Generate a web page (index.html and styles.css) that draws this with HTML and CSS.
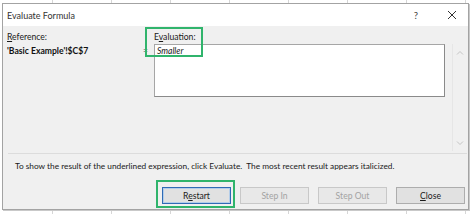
FILE: index.html
```html
<!DOCTYPE html>
<html lang="en">

<head>
  <meta charset="UTF-8" />
  <title>Evaluate Formula</title>
  <link rel="stylesheet" href="styles.css">
</head>

<body>
  <div class="dialog">
    <div class="titlebar">
      <span class="title">Evaluate Formula</span>
      <span class="help">?</span>
      <svg class="close-x" width="10" height="10" viewBox="0 0 10 10">
        <path d="M1 1 L9 9 M9 1 L1 9" stroke="#333" stroke-width="1" fill="none" />
      </svg>
    </div>

    <div class="content">
      <div class="main">
        <div class="label"><u>R</u>eference:</div>
        <div></div>
        <div class="label">E<u>v</u>aluation:</div>
        <div></div>

        <div class="ref">'Basic Example'!$C$7</div>
        <div class="equals">=</div>
        <div class="eval-box"><i>Smaller</i></div>
        <div class="scroller">
          <svg width="8" height="5" viewBox="0 0 8 5">
            <path d="M1 4.5 L4 1.5 L7 4.5" stroke="#c4c4c4" fill="none" />
          </svg>
          <svg width="8" height="5" viewBox="0 0 8 5">
            <path d="M1 0.5 L4 3.5 L7 0.5" stroke="#c4c4c4" fill="none" />
          </svg>
        </div>
      </div>

      <div class="separator"></div>

      <p class="info">To show the result of the underlined expression, click Evaluate.&nbsp; The most recent result appears italicized.</p>

      <div class="buttons">
        <button class="btn focused">R<u>e</u>start</button>
        <button class="btn" disabled>Step In</button>
        <button class="btn" disabled>Step Out</button>
        <button class="btn"><u>C</u>lose</button>
      </div>
    </div>

    <!-- green highlight boxes drawn over the dialog -->
    <div class="mark mark-eval"></div>
    <div class="mark mark-restart"></div>
  </div>
</body>

</html>
```

FILE: styles.css
```css
* {
  box-sizing: border-box;
}

body {
  margin: 0;
  width: 474px;
  height: 214px;
  overflow: hidden;
  padding: 3px 0 0 2px;
  background-color: #fff;
  background-image: linear-gradient(90deg, #d6d6d6 1px, transparent 1px);
  background-size: 59px 100%;
  background-position: 52px 0;
  font-family: Lato, 'Open Sans', sans-serif;
  color: #1a1a1a;
}

.dialog {
  position: relative;
  width: 467px;
  height: 207px;
  border: 1px solid #a3a3a3;
  background: #f0f0f0;
  box-shadow: 1px 1px 0 #c9c9c9;
}

.titlebar {
  height: 22px;
  background: #fff;
  display: flex;
  align-items: center;
  padding-left: 4px;
}

.title {
  font-size: 9px;
  color: #333;
  flex: 1;
}

.help {
  font-size: 9.5px;
  color: #444;
  margin-right: 29px;
}

.close-x {
  margin-right: 11px;
}

.content {
  padding: 4px 0 0 4px;
}

.main {
  display: grid;
  grid-template-columns: 136px 11px 291px 15px;
  grid-template-rows: 14px auto;
  font-size: 8.6px;
}

.label {
  line-height: 14px;
}

.ref {
  font-weight: bold;
  font-size: 8.6px;
  line-height: 14px;
  align-self: start;
  color: #111;
}

.equals {
  line-height: 14px;
  align-self: start;
  color: #444;
}

.eval-box {
  height: 53px;
  width: 291px;
  align-self: start;
  background: #fff;
  border: 1px solid #a6a6a6;
  border-right-color: #8a8a8a;
  border-bottom-color: #8a8a8a;
  padding-left: 2px;
  line-height: 12px;
}

.scroller {
  margin-left: 7px;
  width: 15px;
  height: 107px;
  border-left: 1px solid #e6e6e6;
  display: flex;
  flex-direction: column;
  justify-content: space-between;
  align-items: center;
  padding: 6px 0 5px;
}

.separator {
  height: 1px;
  background: #dcdcdc;
  margin: 2px 1px 0 1px;
}

.info {
  margin: 5px 0 0 8px;
  font-size: 8.3px;
  line-height: 14px;
  white-space: nowrap;
}

.buttons {
  display: flex;
  justify-content: flex-end;
  gap: 9px;
  margin-top: 14px;
  padding-right: 3px;
}

.btn {
  width: 69px;
  height: 17px;
  padding: 0;
  border: 1px solid #adadad;
  background: #e1e1e1;
  font-family: inherit;
  font-size: 8.6px;
  line-height: 14px;
  color: #1a1a1a;
}

.btn:disabled {
  color: #a3a3a3;
  border-color: #c8c8c8;
  background: #e8e8e8;
}

.btn.focused {
  border-color: #2f6bb5;
  box-shadow: inset 0 0 0 1px #b4cde9;
}

.mark {
  position: absolute;
  border: 2px solid #30b46c;
}

.mark-eval {
  left: 142px;
  top: 23px;
  width: 58px;
  height: 30px;
}

.mark-restart {
  left: 153px;
  top: 176px;
  width: 79px;
  height: 28px;
}
```
